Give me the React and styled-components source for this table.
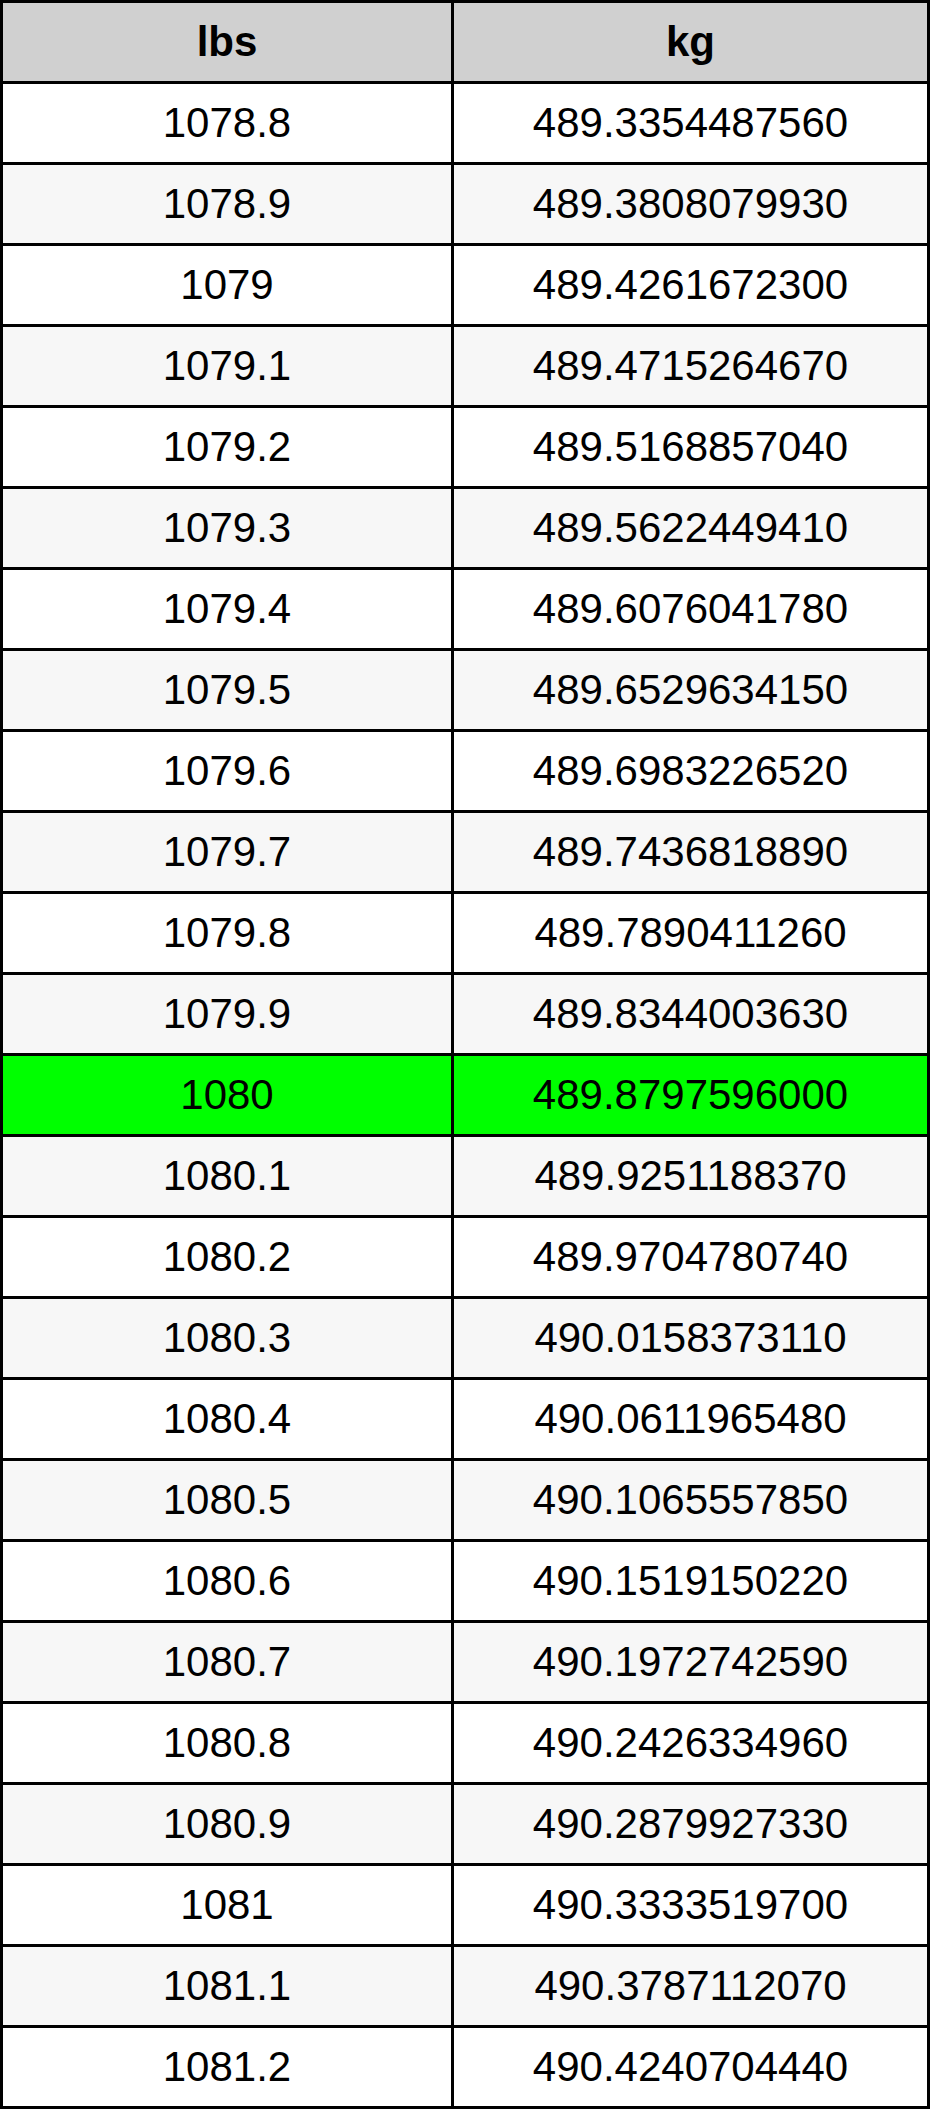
import React from "react";
import styled, { createGlobalStyle } from "styled-components";

const GlobalStyle = createGlobalStyle`
  html, body {
    margin: 0;
    padding: 0;
    background: #ffffff;
  }
  body {
    font-family: "Liberation Sans", Arial, Helvetica, sans-serif;
  }
`;

const Table = styled.table`
  width: 930px;
  border-collapse: separate;
  border-spacing: 0;
  border-top: 3px solid #000;
  border-left: 3px solid #000;
  box-sizing: border-box;
  table-layout: fixed;
  font-family: "Liberation Sans", Arial, Helvetica, sans-serif;
  font-size: 42px;
  color: #000;
`;

const HeadCell = styled.th`
  height: 78px;
  padding: 0;
  background: #d0d0d0;
  border-right: 3px solid #000;
  border-bottom: 3px solid #000;
  font-weight: bold;
  text-align: center;
  vertical-align: middle;
  width: ${(p) => (p.$first ? "448px" : "auto")};
  line-height: 1;
`;

const Row = styled.tr`
  background: ${(p) =>
    p.$highlight ? "#00ff00" : p.$alt ? "#f7f7f7" : "#ffffff"};
`;

const Cell = styled.td`
  height: 78px;
  padding: 0;
  border-right: 3px solid #000;
  border-bottom: 3px solid #000;
  text-align: center;
  vertical-align: middle;
  line-height: 1;
`;

const rows = [
  ["1078.8", "489.3354487560"],
  ["1078.9", "489.3808079930"],
  ["1079", "489.4261672300"],
  ["1079.1", "489.4715264670"],
  ["1079.2", "489.5168857040"],
  ["1079.3", "489.5622449410"],
  ["1079.4", "489.6076041780"],
  ["1079.5", "489.6529634150"],
  ["1079.6", "489.6983226520"],
  ["1079.7", "489.7436818890"],
  ["1079.8", "489.7890411260"],
  ["1079.9", "489.8344003630"],
  ["1080", "489.8797596000"],
  ["1080.1", "489.9251188370"],
  ["1080.2", "489.9704780740"],
  ["1080.3", "490.0158373110"],
  ["1080.4", "490.0611965480"],
  ["1080.5", "490.1065557850"],
  ["1080.6", "490.1519150220"],
  ["1080.7", "490.1972742590"],
  ["1080.8", "490.2426334960"],
  ["1080.9", "490.2879927330"],
  ["1081", "490.3333519700"],
  ["1081.1", "490.3787112070"],
  ["1081.2", "490.4240704440"],
];

export default function App() {
  return (
    <>
      <GlobalStyle />
      <Table>
        <thead>
          <tr>
            <HeadCell $first>lbs</HeadCell>
            <HeadCell>kg</HeadCell>
          </tr>
        </thead>
        <tbody>
          {rows.map(([lbs, kg], i) => (
            <Row key={lbs} $alt={i % 2 === 1} $highlight={lbs === "1080"}>
              <Cell>{lbs}</Cell>
              <Cell>{kg}</Cell>
            </Row>
          ))}
        </tbody>
      </Table>
    </>
  );
}
